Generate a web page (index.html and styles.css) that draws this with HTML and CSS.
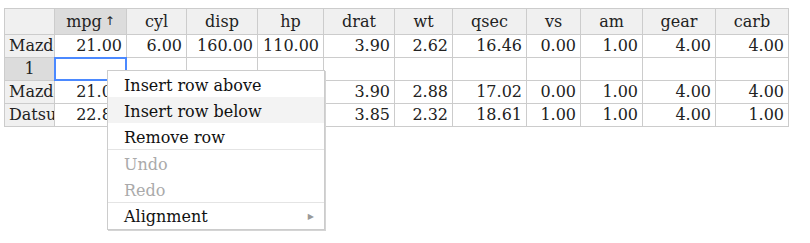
FILE: index.html
```html
<!DOCTYPE html>
<html lang="en">
  <head>
    <meta charset="UTF-8" />
    <title>mtcars</title>
    <link rel="stylesheet" href="styles.css">
  </head>
  <body>
    <div class="sheet">
      <!-- 表格 -->
      <div class="grid">
        <div class="hd"></div>
        <div class="hd active">mpg<span class="sort">↑</span></div>
        <div class="hd">cyl</div>
        <div class="hd">disp</div>
        <div class="hd">hp</div>
        <div class="hd">drat</div>
        <div class="hd">wt</div>
        <div class="hd">qsec</div>
        <div class="hd">vs</div>
        <div class="hd">am</div>
        <div class="hd">gear</div>
        <div class="hd">carb</div>

        <div class="rh">Mazda RX4</div>
        <div class="td">21.00</div>
        <div class="td">6.00</div>
        <div class="td">160.00</div>
        <div class="td">110.00</div>
        <div class="td">3.90</div>
        <div class="td">2.62</div>
        <div class="td">16.46</div>
        <div class="td">0.00</div>
        <div class="td">1.00</div>
        <div class="td">4.00</div>
        <div class="td">4.00</div>

        <div class="rh active">1</div>
        <div class="td current"></div>
        <div class="td"></div>
        <div class="td"></div>
        <div class="td"></div>
        <div class="td"></div>
        <div class="td"></div>
        <div class="td"></div>
        <div class="td"></div>
        <div class="td"></div>
        <div class="td"></div>
        <div class="td"></div>

        <div class="rh">Mazda RX4 Wag</div>
        <div class="td">21.00</div>
        <div class="td">6.00</div>
        <div class="td">160.00</div>
        <div class="td">110.00</div>
        <div class="td">3.90</div>
        <div class="td">2.88</div>
        <div class="td">17.02</div>
        <div class="td">0.00</div>
        <div class="td">1.00</div>
        <div class="td">4.00</div>
        <div class="td">4.00</div>

        <div class="rh">Datsun 710</div>
        <div class="td">22.80</div>
        <div class="td">4.00</div>
        <div class="td">108.00</div>
        <div class="td">93.00</div>
        <div class="td">3.85</div>
        <div class="td">2.32</div>
        <div class="td">18.61</div>
        <div class="td">1.00</div>
        <div class="td">1.00</div>
        <div class="td">4.00</div>
        <div class="td">1.00</div>
      </div>

      <!-- 右键菜单 -->
      <ul class="menu">
        <li class="item">Insert row above</li>
        <li class="item hover">Insert row below</li>
        <li class="item">Remove row</li>
        <li class="sep"></li>
        <li class="item disabled">Undo</li>
        <li class="item disabled">Redo</li>
        <li class="sep"></li>
        <li class="item sub">Alignment<span class="caret">▶</span></li>
      </ul>
    </div>
  </body>
</html>
```

FILE: styles.css
```css
* {
  margin: 0;
  padding: 0;
  box-sizing: border-box;
}
ul {
  list-style: none;
}

html,
body {
  height: 100%;
}

body {
  font-family: "DejaVu Serif", serif;
  font-size: 16px;
  color: #222;
  background: #fff;
}

.sheet {
  position: relative;
  padding: 8px 0 0 4px;
  height: 100%;
}

.grid {
  display: grid;
  grid-template-columns: 50px 72px 60px 71px 66px 71px 58px 74px 54px 62px 73px 73px;
  grid-template-rows: 26px;
  grid-auto-rows: 23px;
  width: max-content;
  border-left: 1px solid #ccc;
  border-top: 1px solid #ccc;
}

.grid > div {
  border-right: 1px solid #ccc;
  border-bottom: 1px solid #ccc;
  padding: 0 4px;
  white-space: nowrap;
  overflow: hidden;
}

.hd {
  background: #f0f0f0;
  text-align: center;
  line-height: 25px;
}

.rh {
  background: #f0f0f0;
  text-align: center;
  line-height: 22px;
}

.hd.active,
.rh.active {
  background: #dcdcdc;
}

.sort {
  font-family: "DejaVu Sans", sans-serif;
  font-size: 12px;
  margin-left: 3px;
  position: relative;
  top: -2px;
}

.td {
  text-align: right;
  line-height: 22px;
  background: #fff;
}

.grid > .current {
  position: relative;
  overflow: visible;
}
.current::after {
  content: "";
  position: absolute;
  top: -1px;
  left: -1px;
  right: -1px;
  bottom: -1px;
  border: 2px solid #4b89ff;
}

.menu {
  position: absolute;
  left: 107px;
  top: 70px;
  width: 218px;
  background: #fff;
  border: 1px solid #ccc;
  box-shadow: 1px 1px 0 #d4d4d4;
  z-index: 5;
}

.menu .item {
  height: 26px;
  line-height: 26px;
  padding: 2px 10px 0 16px;
  color: #111;
}

.menu .item.hover {
  background: #f3f3f3;
}

.menu .item.disabled {
  color: #aaa;
}

.menu .sep {
  height: 1px;
  background: #e4e4e4;
}

.menu .sub {
  display: flex;
  justify-content: space-between;
  align-items: center;
}

.caret {
  font-family: "DejaVu Sans", sans-serif;
  font-size: 8px;
  color: #999;
}
```
